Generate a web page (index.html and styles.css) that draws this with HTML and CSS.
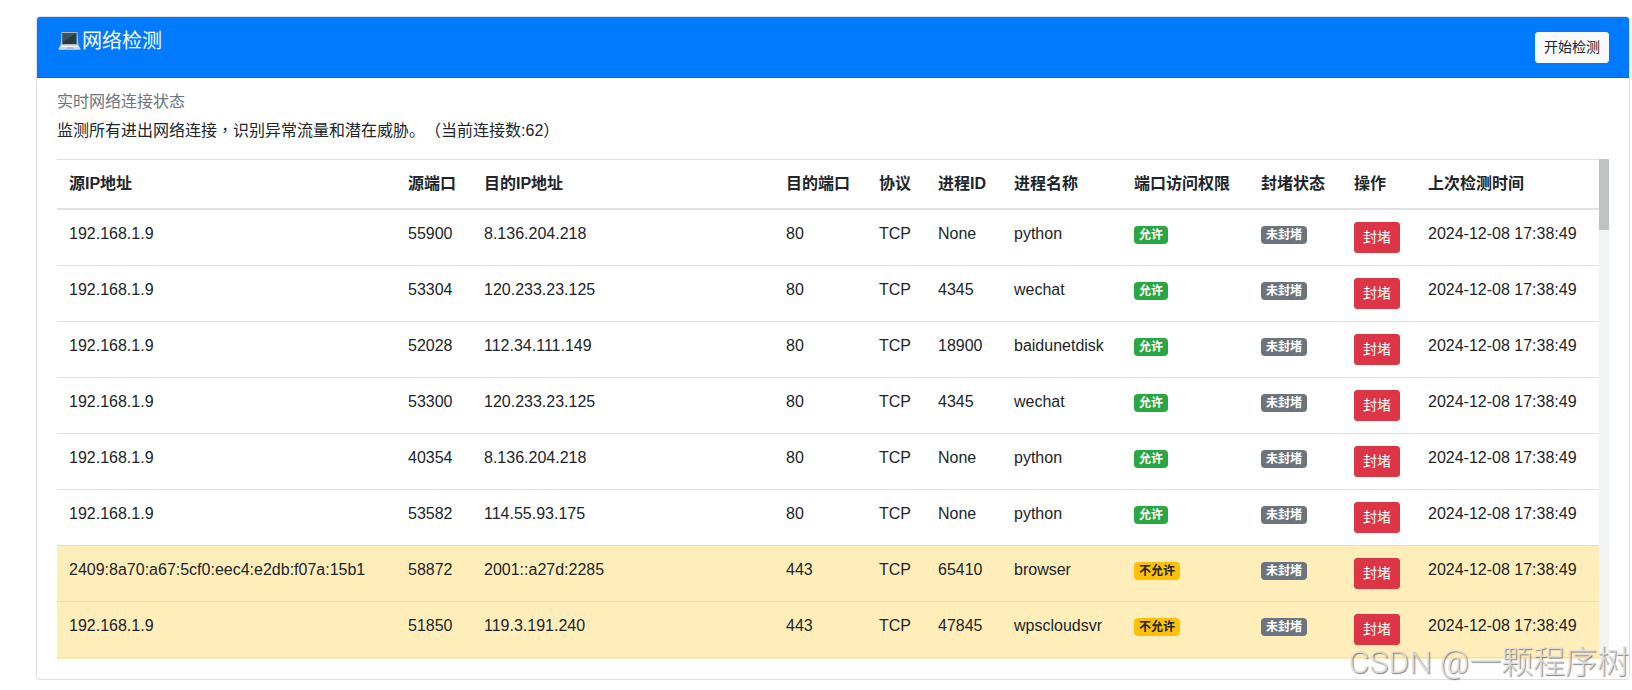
FILE: index.html
```html
<!DOCTYPE html>
<html lang="zh-CN">
<head>
<meta charset="utf-8">
<title>网络检测</title>
<link rel="stylesheet" href="styles.css">
</head>
<body>
<main class="card">
  <header class="card-header">
    <h5 class="card-title"><svg class="laptop" viewBox="0 0 24 20" aria-hidden="true"><path d="M4 1h16l1 13H3z" fill="#a9b9bf"/><path d="M5 2h14v11H5z" fill="#263c43"/><path d="M5 2h14L5 11z" fill="#3c545b"/><path d="M3 14h18l2 4H1z" fill="#cfd8dc"/><path d="M4 15h16l1 1H3z" fill="#eff5f7"/><path d="M10 16h5l1 2H9z" fill="#aebfc6"/><path d="M1 18h22v1H1z" fill="#b3bcc0"/></svg>网络检测</h5>
    <button class="btn btn-light" type="button">开始检测</button>
  </header>
  <section class="card-body">
    <h6 class="subtitle">实时网络连接状态</h6>
    <p class="summary">监测所有进出网络连接<span class="comma" lang="zh-TW">，</span>识别异常流量和潜在威胁。（当前连接数:62）</p>
    <div class="scroll-area">
      <table class="table">
        <colgroup><col class="c-src"><col class="c-sport"><col class="c-dst"><col class="c-dport"><col class="c-proto"><col class="c-pid"><col class="c-name"><col class="c-perm"><col class="c-state"><col class="c-act"><col class="c-time"></colgroup>
        <thead>
          <tr><th>源IP地址</th><th>源端口</th><th>目的IP地址</th><th>目的端口</th><th>协议</th><th>进程ID</th><th>进程名称</th><th>端口访问权限</th><th>封堵状态</th><th>操作</th><th>上次检测时间</th></tr>
        </thead>
        <tbody>
          <tr><td>192.168.1.9</td><td>55900</td><td>8.136.204.218</td><td>80</td><td>TCP</td><td>None</td><td>python</td><td><span class="badge success">允许</span></td><td><span class="badge secondary">未封堵</span></td><td><button class="btn btn-danger" type="button">封堵</button></td><td>2024-12-08 17:38:49</td></tr>
          <tr><td>192.168.1.9</td><td>53304</td><td>120.233.23.125</td><td>80</td><td>TCP</td><td>4345</td><td>wechat</td><td><span class="badge success">允许</span></td><td><span class="badge secondary">未封堵</span></td><td><button class="btn btn-danger" type="button">封堵</button></td><td>2024-12-08 17:38:49</td></tr>
          <tr><td>192.168.1.9</td><td>52028</td><td>112.34.111.149</td><td>80</td><td>TCP</td><td>18900</td><td>baidunetdisk</td><td><span class="badge success">允许</span></td><td><span class="badge secondary">未封堵</span></td><td><button class="btn btn-danger" type="button">封堵</button></td><td>2024-12-08 17:38:49</td></tr>
          <tr><td>192.168.1.9</td><td>53300</td><td>120.233.23.125</td><td>80</td><td>TCP</td><td>4345</td><td>wechat</td><td><span class="badge success">允许</span></td><td><span class="badge secondary">未封堵</span></td><td><button class="btn btn-danger" type="button">封堵</button></td><td>2024-12-08 17:38:49</td></tr>
          <tr><td>192.168.1.9</td><td>40354</td><td>8.136.204.218</td><td>80</td><td>TCP</td><td>None</td><td>python</td><td><span class="badge success">允许</span></td><td><span class="badge secondary">未封堵</span></td><td><button class="btn btn-danger" type="button">封堵</button></td><td>2024-12-08 17:38:49</td></tr>
          <tr><td>192.168.1.9</td><td>53582</td><td>114.55.93.175</td><td>80</td><td>TCP</td><td>None</td><td>python</td><td><span class="badge success">允许</span></td><td><span class="badge secondary">未封堵</span></td><td><button class="btn btn-danger" type="button">封堵</button></td><td>2024-12-08 17:38:49</td></tr>
          <tr class="warn"><td>2409:8a70:a67:5cf0:eec4:e2db:f07a:15b1</td><td>58872</td><td>2001::a27d:2285</td><td>443</td><td>TCP</td><td>65410</td><td>browser</td><td><span class="badge warning">不允许</span></td><td><span class="badge secondary">未封堵</span></td><td><button class="btn btn-danger" type="button">封堵</button></td><td>2024-12-08 17:38:49</td></tr>
          <tr class="warn"><td>192.168.1.9</td><td>51850</td><td>119.3.191.240</td><td>443</td><td>TCP</td><td>47845</td><td>wpscloudsvr</td><td><span class="badge warning">不允许</span></td><td><span class="badge secondary">未封堵</span></td><td><button class="btn btn-danger" type="button">封堵</button></td><td>2024-12-08 17:38:49</td></tr>
          <tr class="warn"><td colspan="11"></td></tr>
        </tbody>
      </table>
      <div class="track"><div class="thumb"></div></div>
    </div>
  </section>
</main>
<div class="watermark">CSDN @一颗程序树</div>
</body>
</html>
```
FILE: styles.css
```css
* { box-sizing: border-box; }
body {
  margin: 0;
  padding: 16px 2px 10px 36px;
  position: relative;
  font-family: "Liberation Sans", "Droid Sans Fallback", "Noto Sans CJK SC", sans-serif;
  font-size: 16px;
  line-height: 24px;
  color: #212529;
  background: #fff;
}
.card {
  border: 1px solid rgba(0, 0, 0, 0.125);
  border-radius: 4px;
}
.card-header {
  display: flex;
  justify-content: space-between;
  align-items: center;
  padding: 12px 20px;
  color: #fff;
  background: #007bff;
  border-bottom: 1px solid rgba(0, 0, 0, 0.125);
  border-radius: 3px 3px 0 0;
}
.card-title {
  display: flex;
  align-items: center;
  margin: 0 0 12px;
  font-size: 20px;
  font-weight: 400;
  line-height: 24px;
}
.laptop { width: 25px; height: 20px; }
.btn {
  padding: 4px 8px;
  border: 1px solid transparent;
  border-radius: 3px;
  font-family: inherit;
  font-size: 14px;
  line-height: 21px;
  vertical-align: middle;
}
.btn-light { color: #212529; background: #f8f9fa; border-color: #f8f9fa; }
.btn-danger { color: #fff; background: #dc3545; border-color: #dc3545; }
.card-body { padding: 14px 20px 20px; }
.subtitle {
  margin: 0 0 8px;
  font-size: 16px;
  font-weight: 400;
  line-height: 19px;
  color: #6c757d;
}
.summary { margin: 0 0 16px; text-spacing-trim: space-all; }
.comma { font-family: "Noto Sans CJK TC", sans-serif; line-height: 1; }
.scroll-area {
  display: flex;
  max-height: 500px;
  overflow: hidden;
}
.table {
  flex: 1;
  min-width: 0;
  table-layout: fixed;
  border-collapse: separate;
  border-spacing: 0;
}
.table th, .table td {
  padding: 12px;
  border-top: 1px solid #dee2e6;
  text-align: left;
  vertical-align: top;
  white-space: nowrap;
}
.table th { border-bottom: 2px solid #dee2e6; }
.table td { height: 56px; }
.table tbody tr:first-child td { height: 55px; border-top: 0; }
.table .warn td { background: #ffeeba; border-top-color: #ffdf7e; }
.c-src { width: 339px; }
.c-sport { width: 76px; }
.c-dst { width: 302px; }
.c-dport { width: 93px; }
.c-proto { width: 59px; }
.c-pid { width: 76px; }
.c-name { width: 120px; }
.c-perm { width: 127px; }
.c-state { width: 93px; }
.c-act { width: 74px; }
.c-time { width: 183px; }
.badge {
  display: inline-block;
  padding: 3px 5px;
  border-radius: 4px;
  font-size: 12px;
  font-weight: 700;
  line-height: 12px;
  color: #fff;
}
.success { background: #28a745; }
.secondary { background: #6c757d; }
.warning { color: #212529; background: #ffc107; }
.track { width: 10px; background: #f1f3f5; }
.thumb { height: 71px; background: #c1c3c2; }
.watermark {
  position: absolute;
  right: 3px;
  bottom: 8px;
  font-family: Roboto, "Noto Sans CJK SC", sans-serif;
  font-size: 32px;
  font-weight: 300;
  line-height: 40px;
  color: rgba(225, 225, 225, 0.9);
  text-shadow: 1px 1px 1px rgba(80, 80, 80, 0.7);
  pointer-events: none;
}
```
